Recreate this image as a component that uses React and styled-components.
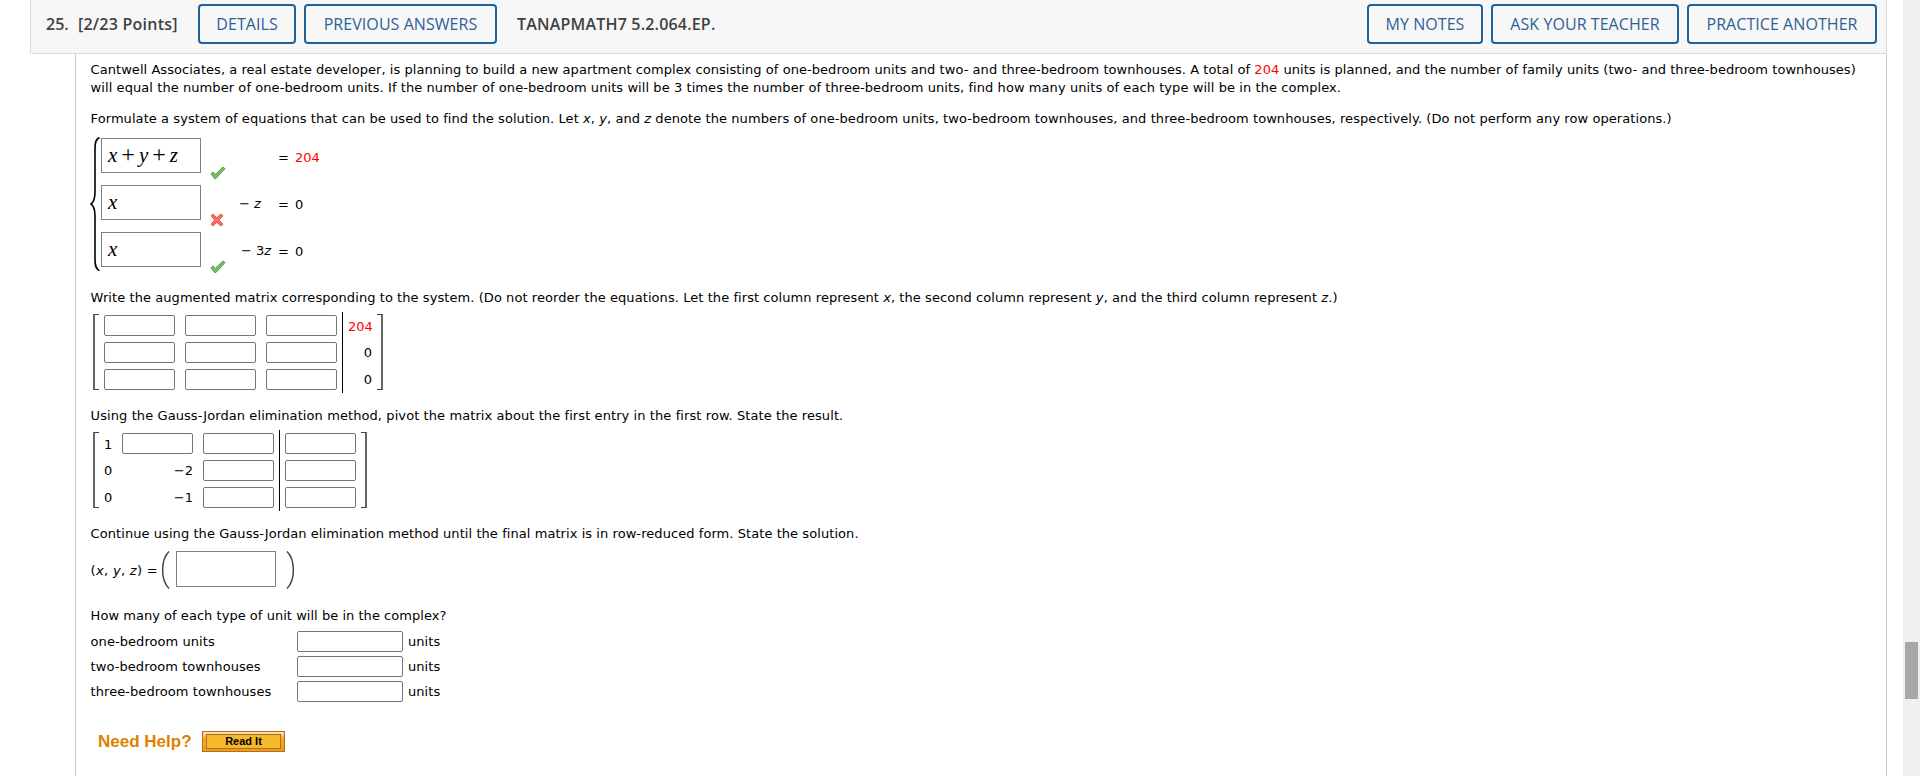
import styled, { createGlobalStyle } from "styled-components";

const GlobalStyle = createGlobalStyle`
  * {
    box-sizing: border-box;
  }

  body {
    margin: 0;
    overflow: hidden;
    background-color: white;
  }
`;

const StyledPage = styled.div`
  display: flex;
  height: 776px;
  width: 1920px;
  overflow: hidden;
  color: black;
  font-family: Verdana, "DejaVu Sans", sans-serif;
  font-size: 13px;
  line-height: 18px;
`;

const StyledMain = styled.main`
  display: flex;
  flex-direction: column;
  width: 1857px;
  margin-left: 30px;
  margin-right: 16px;
`;

const StyledHeader = styled.header`
  display: flex;
  align-items: flex-start;
  height: 54px;
  padding: 4px 9px 0 15px;
  background-color: #f7f7f7;
  border: 1px solid #d9d9d9;
  border-top: none;
  border-radius: 0 0 2px 2px;
  color: #414042;
  font-family: "Open Sans", sans-serif;
  font-size: 16px;
  font-weight: 600;
  line-height: 40px;
  white-space: nowrap;
`;

const StyledNumber = styled.span`
  width: 32px;
`;

const StyledPoints = styled.span`
  width: 120px;
  letter-spacing: 0.23px;
`;

const StyledButton = styled.button`
  width: ${(props) => props.$width}px;
  height: 40px;
  margin: 0 8px 0 0;
  padding: 0;
  background-color: transparent;
  border: 2px solid #1f639c;
  border-radius: 4px;
  color: #2f5f98;
  font: 400 16px/36px "Open Sans", sans-serif;
  letter-spacing: 0.06px;
  white-space: nowrap;
`;

const StyledCode = styled.span`
  margin-left: 12px;
  letter-spacing: 0.19px;
`;

const StyledActions = styled.div`
  display: flex;
  margin-left: auto;
  margin-right: -8px;
`;

const StyledQuestion = styled.section`
  flex: 1;
  margin-left: 45px;
  padding: 7px 0 0 14px;
  border-left: 1px solid #c8c8c8;
  border-right: 1px solid #c8c8c8;
`;

const StyledText = styled.p`
  margin: 0;
  height: 18px;
  padding-left: 0.6px;
  margin-bottom: ${(props) => props.$gap || 0}px;
  letter-spacing: ${(props) => props.$spacing || 0}px;
  white-space: nowrap;
`;

const StyledRed = styled.span`
  color: red;
`;

const StyledSystem = styled.div`
  display: flex;
  height: 134px;
  margin-bottom: 18px;
`;

const StyledBrace = styled.svg`
  width: 11px;
  height: 134px;
`;

const StyledEquations = styled.div`
  display: grid;
  grid-template-rows: repeat(3, 35px);
  row-gap: 12px;
  padding-top: 1px;
`;

const StyledEquation = styled.div`
  display: grid;
  grid-template-columns: 110px 67px 17px 30px;
`;

const StyledAnswer = styled.div`
  width: 100px;
  height: 35px;
  padding-left: 6px;
  border: 1px solid #7f7f7f;
  font: italic 21px/32px "Liberation Serif", serif;
  white-space: nowrap;
`;

const StyledPlus = styled.span`
  margin: 0 4px;
  font-size: 24px;
  font-style: normal;
  line-height: 1;
`;

const StyledAnswerCell = styled.div`
  display: flex;
  align-items: flex-end;
  height: 42px;
  gap: 9px;
  width: 126px;

  & > ${StyledAnswer} {
    align-self: flex-start;
  }
`;

const StyledTerm = styled.span`
  padding-top: 10px;
  padding-left: ${(props) => props.$indent}px;
  white-space: pre;
`;

const StyledValue = styled.span`
  padding-top: 11px;
`;

const StyledMatrix = styled.div`
  display: flex;
  align-items: flex-start;
  height: 81px;
  margin-left: 3px;
  margin-bottom: 14px;
`;

const StyledBracket = styled.div`
  width: 6px;
  height: 76px;
  margin-top: 2px;
  border: solid #444;
  border-width: 1px 0;
  border-left: ${(props) => (props.$right ? "none" : "2px solid #666")};
  border-right: ${(props) => (props.$right ? "2px solid #666" : "none")};
`;

const StyledBar = styled.div`
  width: 1px;
  height: 81px;
  background-color: black;
`;

const StyledCells = styled.div`
  display: grid;
  grid-template-columns: ${(props) => props.$columns};
  grid-auto-rows: 21px;
  gap: 6px 10px;
  margin: 3px 5px 0;
  text-align: right;
`;

const StyledEntry = styled.span`
  padding-top: ${(props) => (props.$first ? 3 : 2)}px;
  color: ${(props) => (props.$red ? "red" : "black")};
`;

const StyledInput = styled.input`
  width: ${(props) => props.$width || 71}px;
  height: 21px;
  padding: 0;
  background-color: white;
  border: 1px solid #767676;
  border-radius: 2px;
`;

const StyledSolution = styled.div`
  display: flex;
  height: 38px;
  margin: 8px 0 18px;
`;

const StyledSolutionLabel = styled.span`
  width: 71px;
  padding-top: 11px;
  padding-left: 0.6px;
  letter-spacing: 0.32px;
  white-space: nowrap;
`;

const StyledParen = styled.svg`
  width: 10px;
  height: 38px;
`;

const StyledSolutionBox = styled.div`
  width: 100px;
  height: 36px;
  margin: 0 10px 0 5px;
  border: 1px solid #7f7f7f;
`;

const StyledUnits = styled.div`
  display: grid;
  grid-template-columns: 207px 106px auto;
  grid-auto-rows: 21px;
  row-gap: 4px;
  margin-top: 6px;
`;

const StyledUnitsText = styled.span`
  padding-top: 2px;
  padding-left: ${(props) => props.$left || 0.6}px;
  letter-spacing: 0.06px;
`;

const StyledHelp = styled.div`
  display: flex;
  margin: 29px 0 0 8px;
  color: #e08100;
  font: bold 17px/21px "Liberation Sans", sans-serif;
`;

const StyledHelpLabel = styled.span`
  width: 104px;
`;

const StyledReadIt = styled.button`
  width: 83px;
  height: 21px;
  padding: 2px 3px;
  background: linear-gradient(#fde3c0, #f5a623 35%, #f09a18);
  border: 1px solid #b07018;
  font: bold 11px/13px "Liberation Sans", sans-serif;
`;

const StyledReadItLabel = styled.span`
  display: block;
  height: 15px;
  background-color: #f5b92e;
  border: 1px solid #a87420;
`;

const StyledScrollbar = styled.div`
  width: 17px;
  height: 776px;
  padding: 642px 2px 0;
  background-color: #f0f0f0;
`;

const StyledThumb = styled.div`
  height: 57px;
  background-color: #a8a8a8;
`;

const StyledMark = styled.svg`
  width: 16px;
  height: 14px;
`;

const units = [
  "one-bedroom units",
  "two-bedroom townhouses",
  "three-bedroom townhouses",
];

function Check() {
  return (
    <StyledMark viewBox="0 0 16 14">
      <path
        d="M1 7.8L3 6L5.5 8.3L12.8 1L15 2.6L6 12.5H4.5Z"
        fill="#79bd66"
        stroke="#4c9440"
        strokeWidth="0.9"
      />
    </StyledMark>
  );
}

function Cross() {
  return (
    <StyledMark viewBox="0 0 16 14">
      <path
        d="M1 2.8L3 1L6.7 4.6L11 1L13 2.8L9 7L13 11.2L11 13L6.7 9.4L3 13L1 11.2L4.6 7Z"
        fill="#fa6c64"
        stroke="#dd4640"
        strokeWidth="0.8"
      />
    </StyledMark>
  );
}

function Paren({ right }) {
  return (
    <StyledParen viewBox="0 0 10 38">
      <path
        d={right ? "M1 0.5C9.5 9 9.5 29 1 37.5" : "M8 0.5C-0.5 9 -0.5 29 8 37.5"}
        fill="none"
        stroke="#444"
        strokeWidth="1.5"
      />
    </StyledParen>
  );
}

function UnitRow({ name }) {
  return (
    <>
      <StyledUnitsText>{name}</StyledUnitsText>
      <StyledInput $width={106} />
      <StyledUnitsText $left={5}>units</StyledUnitsText>
    </>
  );
}

export default function App() {
  return (
    <>
      <GlobalStyle />
      <StyledPage>
        <StyledMain>
          <StyledHeader>
            <StyledNumber>25.</StyledNumber>
            <StyledPoints>[2/23 Points]</StyledPoints>
            <StyledButton $width={98}>DETAILS</StyledButton>
            <StyledButton $width={193}>PREVIOUS ANSWERS</StyledButton>
            <StyledCode>TANAPMATH7 5.2.064.EP.</StyledCode>
            <StyledActions>
              <StyledButton $width={116}>MY NOTES</StyledButton>
              <StyledButton $width={188}>ASK YOUR TEACHER</StyledButton>
              <StyledButton $width={190}>PRACTICE ANOTHER</StyledButton>
            </StyledActions>
          </StyledHeader>

          <StyledQuestion>
            <StyledText $spacing={0.05}>
              Cantwell Associates, a real estate developer, is planning to build
              a new apartment complex consisting of one-bedroom units and two-
              and three-bedroom townhouses. A total of{" "}
              <StyledRed>204</StyledRed> units is planned, and the number of
              family units (two- and three-bedroom townhouses)
            </StyledText>
            <StyledText $gap={13} $spacing={0.074}>
              will equal the number of one-bedroom units. If the number of
              one-bedroom units will be 3 times the number of three-bedroom
              units, find how many units of each type will be in the complex.
            </StyledText>
            <StyledText $gap={9} $spacing={0.07}>
              Formulate a system of equations that can be used to find the
              solution. Let <i>x</i>, <i>y</i>, and <i>z</i> denote the numbers
              of one-bedroom units, two-bedroom townhouses, and three-bedroom
              townhouses, respectively. (Do not perform any row operations.)
            </StyledText>

            <StyledSystem>
              <StyledBrace viewBox="0 0 11 134">
                <path
                  d="M9.5 0.5C5.5 2 5 6 5 12V55C5 62 4 65 1 67C4 69 5 72 5 79V122C5 128 5.5 132 9.5 133.5"
                  fill="none"
                  stroke="black"
                  strokeWidth="1.6"
                />
              </StyledBrace>
              <StyledEquations>
                <StyledEquation>
                  <StyledAnswerCell>
                    <StyledAnswer>
                      x<StyledPlus>+</StyledPlus>y<StyledPlus>+</StyledPlus>z
                    </StyledAnswer>
                    <Check />
                  </StyledAnswerCell>
                  <StyledTerm />
                  <StyledValue>=</StyledValue>
                  <StyledValue>
                    <StyledRed>204</StyledRed>
                  </StyledValue>
                </StyledEquation>
                <StyledEquation>
                  <StyledAnswerCell>
                    <StyledAnswer>x</StyledAnswer>
                    <Cross />
                  </StyledAnswerCell>
                  <StyledTerm $indent={28}>
                    − <i>z</i>
                  </StyledTerm>
                  <StyledValue>=</StyledValue>
                  <StyledValue>0</StyledValue>
                </StyledEquation>
                <StyledEquation>
                  <StyledAnswerCell>
                    <StyledAnswer>x</StyledAnswer>
                    <Check />
                  </StyledAnswerCell>
                  <StyledTerm $indent={30}>
                    − 3<i>z</i>
                  </StyledTerm>
                  <StyledValue>=</StyledValue>
                  <StyledValue>0</StyledValue>
                </StyledEquation>
              </StyledEquations>
            </StyledSystem>

            <StyledText $gap={5} $spacing={0.07}>
              Write the augmented matrix corresponding to the system. (Do not
              reorder the equations. Let the first column represent <i>x</i>,
              the second column represent <i>y</i>, and the third column
              represent <i>z</i>.)
            </StyledText>
            <StyledMatrix>
              <StyledBracket />
              <StyledCells $columns="71px 71px 71px">
                {Array.from({ length: 9 }, (_, index) => (
                  <StyledInput key={index} />
                ))}
              </StyledCells>
              <StyledBar />
              <StyledCells $columns="24px">
                <StyledEntry $first $red>
                  204
                </StyledEntry>
                <StyledEntry>0</StyledEntry>
                <StyledEntry>0</StyledEntry>
              </StyledCells>
              <StyledBracket $right />
            </StyledMatrix>

            <StyledText $gap={5} $spacing={0.088}>
              Using the Gauss-Jordan elimination method, pivot the matrix about
              the first entry in the first row. State the result.
            </StyledText>
            <StyledMatrix>
              <StyledBracket />
              <StyledCells $columns="8px 71px 71px">
                <StyledEntry $first>1</StyledEntry>
                <StyledInput />
                <StyledInput />
                <StyledEntry>0</StyledEntry>
                <StyledEntry>−2</StyledEntry>
                <StyledInput />
                <StyledEntry>0</StyledEntry>
                <StyledEntry>−1</StyledEntry>
                <StyledInput />
              </StyledCells>
              <StyledBar />
              <StyledCells $columns="71px">
                <StyledInput />
                <StyledInput />
                <StyledInput />
              </StyledCells>
              <StyledBracket $right />
            </StyledMatrix>

            <StyledText $spacing={0.066}>
              Continue using the Gauss-Jordan elimination method until the final
              matrix is in row-reduced form. State the solution.
            </StyledText>
            <StyledSolution>
              <StyledSolutionLabel>
                (<i>x</i>, <i>y</i>, <i>z</i>) =
              </StyledSolutionLabel>
              <Paren />
              <StyledSolutionBox />
              <Paren right />
            </StyledSolution>

            <StyledText $spacing={0.035}>
              How many of each type of unit will be in the complex?
            </StyledText>
            <StyledUnits>
              {units.map((name) => (
                <UnitRow key={name} name={name} />
              ))}
            </StyledUnits>

            <StyledHelp>
              <StyledHelpLabel>Need Help?</StyledHelpLabel>
              <StyledReadIt>
                <StyledReadItLabel>Read It</StyledReadItLabel>
              </StyledReadIt>
            </StyledHelp>
          </StyledQuestion>
        </StyledMain>
        <StyledScrollbar>
          <StyledThumb />
        </StyledScrollbar>
      </StyledPage>
    </>
  );
}
